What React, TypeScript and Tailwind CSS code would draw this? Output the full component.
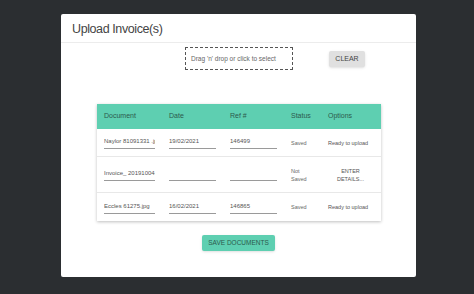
import React from "react";

type Row = {
  doc: string;
  date: string;
  ref: string;
  status: string[];
  option: string[];
  tall?: boolean;
};

const rows: Row[] = [
  { doc: "Naylor 81091331 .jpg", date: "19/02/2021", ref: "146499", status: ["Saved"], option: ["Ready to upload"] },
  { doc: "Invoice_ 20191004-0", date: "", ref: "", status: ["Not", "Saved"], option: ["ENTER", "DETAILS..."], tall: true },
  { doc: "Eccles 61275.jpg", date: "16/02/2021", ref: "146865", status: ["Saved"], option: ["Ready to upload"] },
];

function Field({ value, width }: { value: string; width: string }) {
  return (
    <div className={`${width} h-[13px] border-b border-[#9a9a9a] text-[6px] leading-[10px] text-[#555] overflow-hidden whitespace-nowrap`}>
      {value}
    </div>
  );
}

export default function App() {
  return (
    <div
      className="w-[474px] h-[294px] bg-[#2b2e31] pt-[14px] pl-[61px] overflow-hidden"
      style={{ fontFamily: '"Liberation Sans", Arial, sans-serif' }}
    >
      <div className="w-[355px] h-[263px] bg-white rounded-[2px] flex flex-col">
        {/* Title */}
        <div className="h-[29px] border-b border-[#ececec] px-[11px] pt-[8px]">
          <h2 className="text-[12.5px] leading-[15px] tracking-[-0.4px] text-[#444] font-normal">Upload Invoice(s)</h2>
        </div>

        {/* Drop zone + clear */}
        <div className="flex items-start pt-[4px] pl-[124px]">
          <div className="w-[108px] h-[23px] border border-dashed border-[#555] flex items-center pl-[5px] text-[6.5px] text-[#666]">
            Drag &apos;n&apos; drop or click to select
          </div>
          <button className="ml-[36px] mt-[4px] w-[36px] h-[16px] bg-[#e0e0e0] rounded-[2px] text-[7px] text-[#444] shadow-sm">
            CLEAR
          </button>
        </div>

        {/* Table */}
        <div className="ml-[36px] mt-[34px] w-[284px] bg-white shadow-[0_1px_3px_rgba(0,0,0,0.25)]">
          <div className="h-[25px] bg-[#5ecfb1] grid grid-cols-[65px_61px_61px_37px_53px] pl-[7px] items-center text-[7px] text-[#2d5a4d]">
            <div>Document</div>
            <div>Date</div>
            <div>Ref #</div>
            <div>Status</div>
            <div>Options</div>
          </div>
          {rows.map((r, i) => (
            <div
              key={i}
              className={`${r.tall ? "h-[36px]" : "h-[28px]"} ${i < rows.length - 1 ? "border-b border-[#e8e8e8]" : ""} grid grid-cols-[65px_61px_61px_37px_53px] pl-[7px] items-center`}
            >
              <Field value={r.doc} width="w-[51px]" />
              <Field value={r.date} width="w-[47px]" />
              <Field value={r.ref} width="w-[47px]" />
              <div className="text-[5.5px] leading-[8px] text-[#666]">
                {r.status.map((s) => (
                  <div key={s}>{s}</div>
                ))}
              </div>
              <div className={`text-[5.5px] leading-[8px] text-[#555] ${r.tall ? "text-center pr-[8px]" : ""}`}>
                {r.option.map((s) => (
                  <div key={s}>{s}</div>
                ))}
              </div>
            </div>
          ))}
        </div>

        {/* Save */}
        <div className="flex pl-[141px] mt-[14px]">
          <button className="w-[73px] h-[16px] bg-[#5ecfb1] rounded-[2px] text-[6.5px] text-[#2d5a4d] shadow-sm">
            SAVE DOCUMENTS
          </button>
        </div>
      </div>
    </div>
  );
}
